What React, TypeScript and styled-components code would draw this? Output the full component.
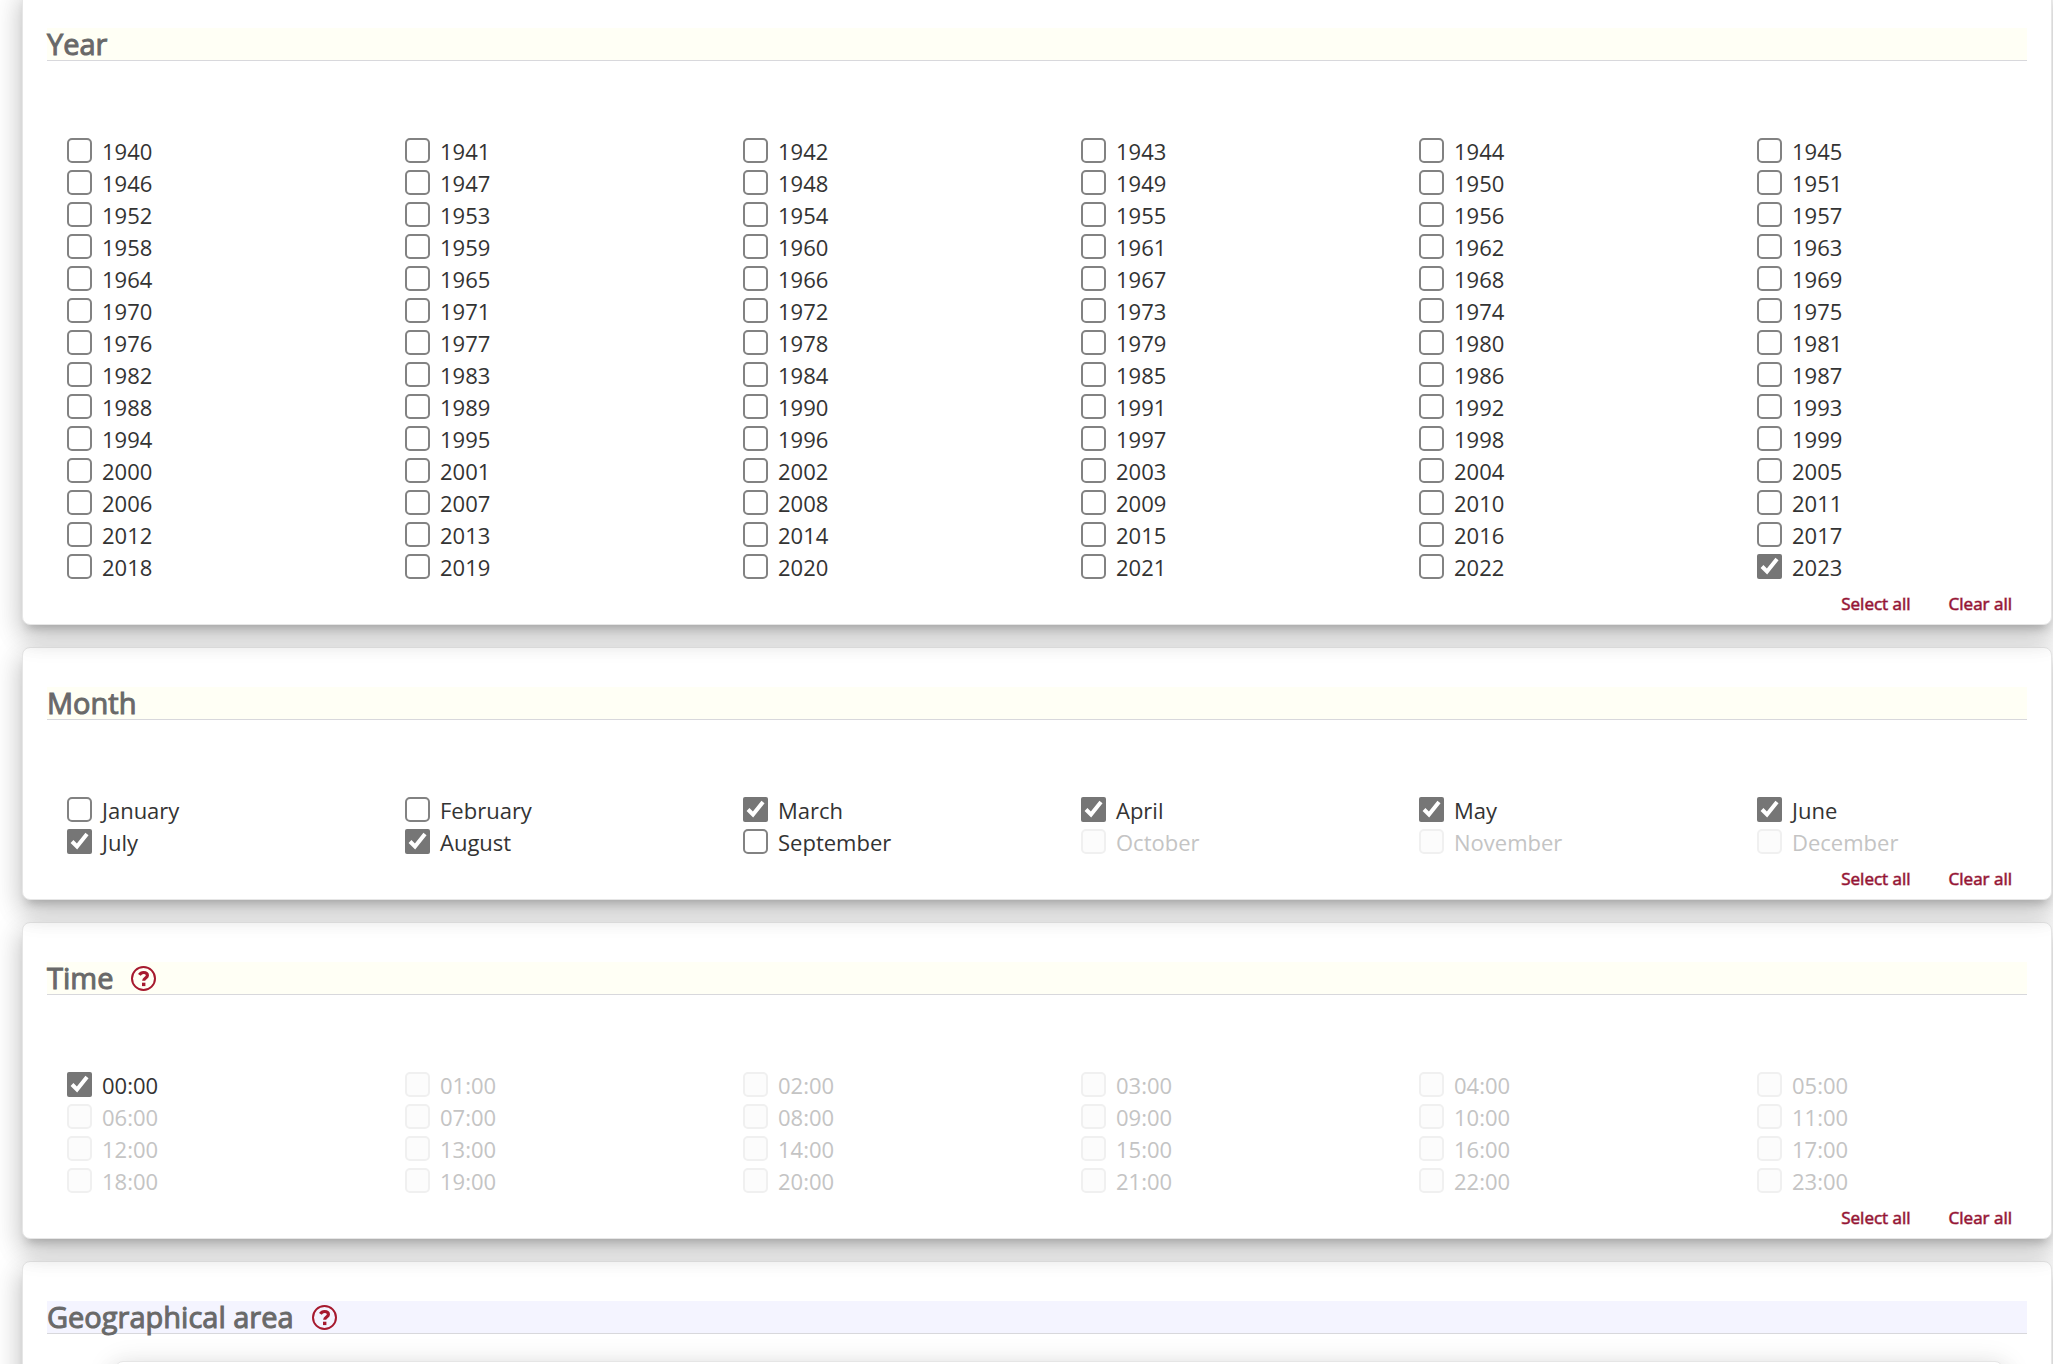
import React, { useState } from "react";
import styled, { createGlobalStyle } from "styled-components";

const GlobalStyle = createGlobalStyle`
  *, *::before, *::after { box-sizing: border-box; }
  body {
    margin: 0;
    background: #fff;
    color: #333;
    font-family: "Open Sans", "Noto Sans", sans-serif;
    font-size: 22px;
    line-height: 32px;
  }
`;

const elevation = `
  0 8px 10px -5px rgba(0, 0, 0, 0.2),
  0 14px 24px 2px rgba(0, 0, 0, 0.13),
  0 6px 28px 4px rgba(0, 0, 0, 0.11)
`;

const Page = styled.main`
  height: 100vh;
  overflow: hidden;
  padding: 0 1px 0 22px;
`;

const Form = styled.form`
  display: flex;
  flex-direction: column;
  gap: 22px;
  margin-top: -12px;
`;

const Card = styled.section<{ $level: number }>`
  position: relative;
  z-index: ${(p) => p.$level};
  flex: none;
  padding-top: 39px;
  border: 1px solid #e6e6e6;
  border-radius: 8px;
  background: #fff;
  box-shadow: ${elevation};
`;

const CardHeader = styled.header<{ $tone: "cream" | "lavender" }>`
  display: flex;
  align-items: center;
  gap: 18px;
  height: 33px;
  margin: 0 24px;
  border-bottom: 1px solid #d8d8dc;
  background: ${(p) => (p.$tone === "cream" ? "#fffff5" : "#f4f4ff")};
`;

const Title = styled.h2`
  margin: 0;
  color: #696969;
  font-size: 29px;
  font-weight: 400;
  line-height: 32px;
  -webkit-text-stroke: 1px currentColor;
`;

const HelpButton = styled.button`
  display: flex;
  padding: 0;
  border: 0;
  background: none;
  color: #a6192e;
  cursor: pointer;
`;

const Options = styled.div`
  display: grid;
  grid-template-columns: repeat(6, 1fr);
  grid-auto-rows: 32px;
  margin-top: 74px;
`;

const OptionLabel = styled.label<{ $disabled?: boolean }>`
  display: flex;
  align-items: flex-start;
  gap: 10px;
  padding-left: 44px;
  color: ${(p) => (p.$disabled ? "#c4c4c4" : "#333")};
`;

const Checkbox = styled.input`
  flex: none;
  width: 25px;
  height: 25px;
  margin: 3px 0 0;
  accent-color: #767676;

  &:not(:checked) {
    appearance: none;
    border: 2px solid #828282;
    border-radius: 5px;
    background: #fff;
  }

  &:disabled {
    border-color: #f0f0f0;
    background: #fcfcfc;
  }
`;

const Actions = styled.footer`
  display: flex;
  justify-content: flex-end;
  gap: 38px;
  padding: 8px 39px 8px 0;
`;

const ActionButton = styled.button`
  padding: 0;
  border: 0;
  background: none;
  color: #941333;
  font-family: inherit;
  font-size: 17px;
  line-height: 25px;
  -webkit-text-stroke: 1px #94133399;
  cursor: pointer;
`;

const AreaPanel = styled.div`
  height: 320px;
  margin: 27px 48px 40px 92px;
  border: 1px solid #e6e6e6;
  border-radius: 8px;
  background: #fff;
  box-shadow: ${elevation};
`;

interface GroupProps {
  title: string;
  level: number;
  options: string[];
  initial: string[];
  isDisabled?: (option: string) => boolean;
  help?: boolean;
}

function Help({ topic }: { topic: string }) {
  return (
    <HelpButton type="button" aria-label={`Help: ${topic}`}>
      <svg width="25" height="25" viewBox="0 0 25 25" fill="none" stroke="currentColor" aria-hidden="true">
        <circle cx="12.5" cy="12.5" r="11.5" strokeWidth="2" />
        <path d="M8.4 8.8C9.4 7.2 10.8 6.5 12.5 6.5C14.8 6.5 16.4 7.7 16.4 9.4C16.4 11.9 12.7 12 12.7 14.8" strokeWidth="3.2" />
        <rect x="11" y="16.7" width="3.4" height="3.4" fill="currentColor" stroke="none" />
      </svg>
    </HelpButton>
  );
}

function OptionGroup({ title, level, options, initial, isDisabled = () => false, help }: GroupProps) {
  const [selected, setSelected] = useState<string[]>(initial);
  const toggle = (option: string) =>
    setSelected((prev) => (prev.includes(option) ? prev.filter((o) => o !== option) : [...prev, option]));

  return (
    <Card $level={level}>
      <CardHeader $tone="cream">
        <Title>{title}</Title>
        {help && <Help topic={title} />}
      </CardHeader>
      <Options role="group" aria-label={title}>
        {options.map((option) => (
          <OptionLabel key={option} htmlFor={`${title}-${option}`} $disabled={isDisabled(option)}>
            <Checkbox
              type="checkbox"
              id={`${title}-${option}`}
              checked={selected.includes(option)}
              disabled={isDisabled(option)}
              onChange={() => toggle(option)}
            />
            {option}
          </OptionLabel>
        ))}
      </Options>
      <Actions>
        <ActionButton type="button" onClick={() => setSelected(options.filter((o) => !isDisabled(o)))}>
          Select all
        </ActionButton>
        <ActionButton type="button" onClick={() => setSelected([])}>
          Clear all
        </ActionButton>
      </Actions>
    </Card>
  );
}

const years = Array.from({ length: 84 }, (_, i) => String(1940 + i));
const months = [
  "January", "February", "March", "April", "May", "June",
  "July", "August", "September", "October", "November", "December",
];
const hours = Array.from({ length: 24 }, (_, i) => `${String(i).padStart(2, "0")}:00`);

export default function App() {
  return (
    <Page>
      <GlobalStyle />
      <Form>
        <OptionGroup title="Year" level={4} options={years} initial={["2023"]} />
        <OptionGroup
          title="Month"
          level={3}
          options={months}
          initial={["March", "April", "May", "June", "July", "August"]}
          isDisabled={(m) => months.indexOf(m) > 8}
        />
        <OptionGroup
          title="Time"
          level={2}
          options={hours}
          initial={["00:00"]}
          isDisabled={(h) => h !== "00:00"}
          help
        />
        <Card $level={1}>
          <CardHeader $tone="lavender">
            <Title>Geographical area</Title>
            <Help topic="Geographical area" />
          </CardHeader>
          <AreaPanel />
        </Card>
      </Form>
    </Page>
  );
}
